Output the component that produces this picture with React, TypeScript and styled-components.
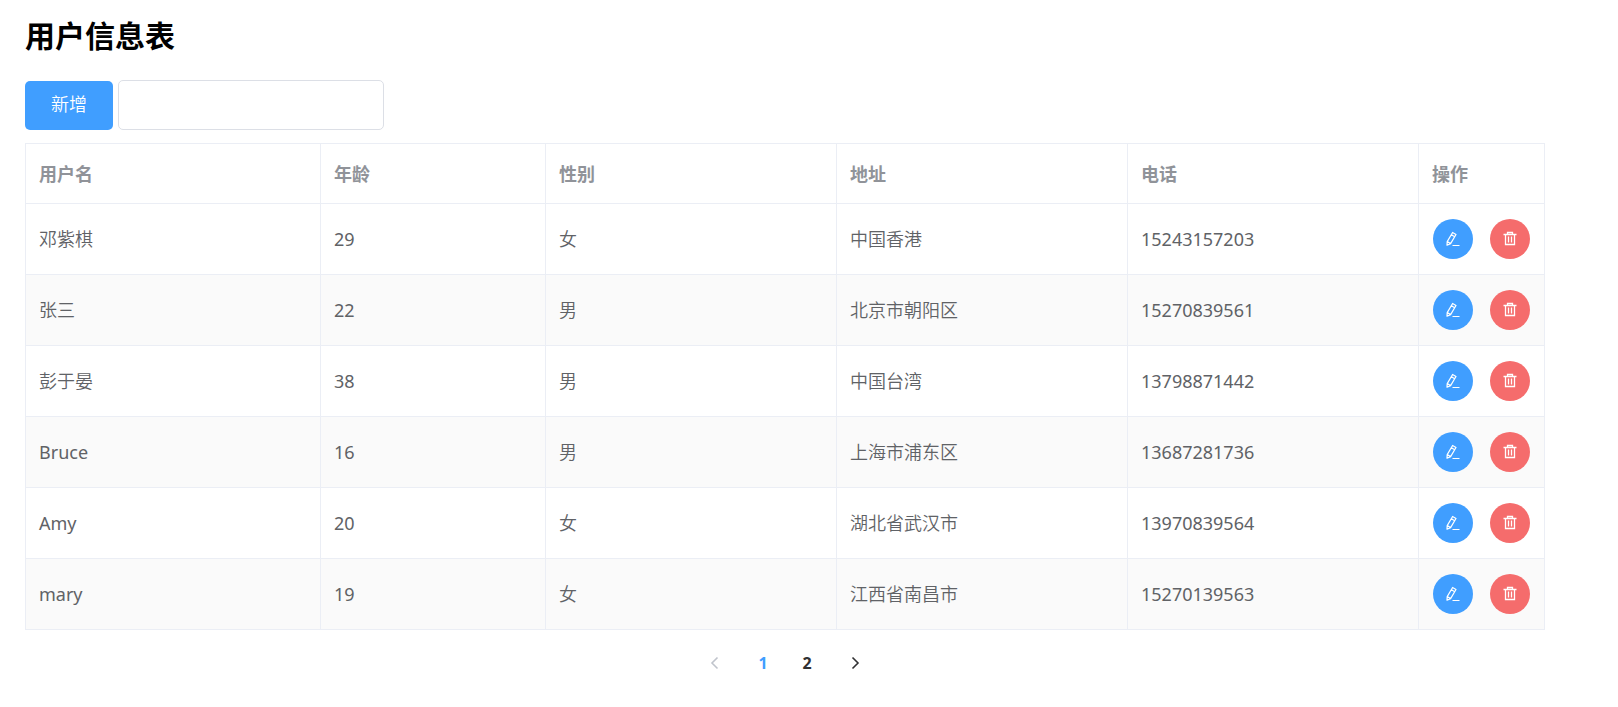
import React from "react";
import styled, { createGlobalStyle } from "styled-components";

const GlobalStyle = createGlobalStyle`
  * { box-sizing: border-box; }
  body {
    margin: 0;
    background: #fff;
    color: #606266;
    font-family: "Noto Sans", "Noto Sans CJK SC", sans-serif;
    font-size: 18px;
    line-height: 24px;
  }
  button, input { font: inherit; }
`;

const Page = styled.main`
  padding: 16px 73px 24px 25px;
`;

const Title = styled.h1`
  margin: 0 0 24px;
  color: #000;
  font-size: 30px;
  font-weight: 700;
  line-height: 40px;
`;

const Toolbar = styled.div`
  display: flex;
  align-items: flex-end;
  gap: 5px;
  margin-bottom: 13px;
`;

const AddButton = styled.button`
  width: 88px;
  height: 49px;
  padding: 0 0 3px;
  border: 0;
  border-radius: 5px;
  background: #409eff;
  color: #fff;
  font-weight: 350;
  cursor: pointer;
`;

const SearchInput = styled.input`
  width: 266px;
  height: 50px;
  padding: 0 18px;
  border: 1px solid #dcdfe6;
  border-radius: 5px;
  outline: none;
  color: #606266;
  &:focus { border-color: #409eff; }
`;

const Table = styled.table`
  width: 100%;
  table-layout: fixed;
  border-collapse: separate;
  border-spacing: 0;
  border: solid #ebeef5;
  border-width: 1px 0 0 1px;
`;

const Column = styled.col<{ $width?: number }>`
  width: ${({ $width }) => ($width ? `${$width}px` : "auto")};
`;

const HeadCell = styled.th`
  height: 60px;
  padding: 0 13px;
  border: solid #ebeef5;
  border-width: 0 1px 1px 0;
  color: #909399;
  font-weight: 700;
  text-align: left;
`;

const Row = styled.tr`
  &:nth-child(even) { background: #fafafa; }
`;

const Cell = styled.td<{ $latin?: boolean }>`
  height: 71px;
  padding: 0 13px;
  border: solid #ebeef5;
  border-width: 0 1px 1px 0;
  font-weight: ${({ $latin }) => ($latin ? 400 : 350)};
`;

const Actions = styled.div`
  display: flex;
  gap: 17px;
  padding-left: 1px;
`;

const RoundButton = styled.button<{ $tone: "primary" | "danger" }>`
  display: flex;
  flex: none;
  align-items: center;
  justify-content: center;
  width: 40px;
  height: 40px;
  padding: 0;
  border: 0;
  border-radius: 50%;
  background: ${({ $tone }) => ($tone === "primary" ? "#409eff" : "#f56c6c")};
  color: #fff;
  cursor: pointer;
`;

const Icon = styled.svg`
  display: block;
  width: 16px;
  height: 16px;
  fill: none;
  stroke: currentColor;
`;

const Pagination = styled.nav`
  display: flex;
  justify-content: center;
  margin-top: 15px;
`;

const Pages = styled.ul`
  display: flex;
  margin: 0 4px;
  padding: 0;
  list-style: none;
`;

const PageButton = styled.button<{ $active?: boolean }>`
  display: flex;
  align-items: center;
  justify-content: center;
  width: 44px;
  height: 36px;
  padding: 0;
  border: 0;
  background: none;
  color: ${({ $active }) => ($active ? "#409eff" : "#303133")};
  font-size: 16px;
  font-weight: 700;
  cursor: pointer;
  &:disabled { color: #c0c4cc; cursor: not-allowed; }
`;

const EditIcon = () => (
  <Icon viewBox="0 0 16 16" strokeWidth="1.2" strokeLinejoin="round" aria-hidden="true">
    <path d="M7.6 1.5 11 3.5 5.6 12.6 2 14.2 2.2 10.6zM6.4 3.7 9.7 5.7M2.2 10.6 5.6 12.6M7.5 14.5h7" />
  </Icon>
);

const DeleteIcon = () => (
  <Icon viewBox="0 0 16 16" strokeWidth="1.3" aria-hidden="true">
    <path d="M1.5 3.5h13M5.5 3.5v-2h5v2M3.5 3.5v10h9v-10M6.5 5.5v6M9.5 5.5v6" />
  </Icon>
);

const ChevronIcon = ({ d }: { d: string }) => (
  <Icon viewBox="0 0 16 16" strokeWidth="1.6" aria-hidden="true">
    <path d={d} />
  </Icon>
);

const headings = ["用户名", "年龄", "性别", "地址", "电话", "操作"];

const users = [
  { name: "邓紫棋", age: 29, gender: "女", address: "中国香港", phone: "15243157203" },
  { name: "张三", age: 22, gender: "男", address: "北京市朝阳区", phone: "15270839561" },
  { name: "彭于晏", age: 38, gender: "男", address: "中国台湾", phone: "13798871442" },
  { name: "Bruce", age: 16, gender: "男", address: "上海市浦东区", phone: "13687281736" },
  { name: "Amy", age: 20, gender: "女", address: "湖北省武汉市", phone: "13970839564" },
  { name: "mary", age: 19, gender: "女", address: "江西省南昌市", phone: "15270139563" },
];

const isLatin = (text: string) => /^[\w\s]+$/.test(text);

export default function App() {
  return (
    <Page lang="zh-CN">
      <GlobalStyle />
      <Title>用户信息表</Title>
      <Toolbar>
        <AddButton type="button">新增</AddButton>
        <SearchInput type="text" aria-label="搜索" />
      </Toolbar>
      <Table>
        <colgroup>
          <Column $width={295} />
          <Column $width={225} />
          <Column />
          <Column />
          <Column />
          <Column $width={126} />
        </colgroup>
        <thead>
          <tr>
            {headings.map((heading) => (
              <HeadCell key={heading} scope="col">{heading}</HeadCell>
            ))}
          </tr>
        </thead>
        <tbody>
          {users.map((user) => (
            <Row key={user.phone}>
              <Cell $latin={isLatin(user.name)}>{user.name}</Cell>
              <Cell $latin>{user.age}</Cell>
              <Cell>{user.gender}</Cell>
              <Cell>{user.address}</Cell>
              <Cell $latin>{user.phone}</Cell>
              <Cell>
                <Actions>
                  <RoundButton type="button" $tone="primary" aria-label="编辑"><EditIcon /></RoundButton>
                  <RoundButton type="button" $tone="danger" aria-label="删除"><DeleteIcon /></RoundButton>
                </Actions>
              </Cell>
            </Row>
          ))}
        </tbody>
      </Table>
      <Pagination aria-label="分页">
        <PageButton type="button" disabled aria-label="上一页"><ChevronIcon d="M10.5 2.5 5 8l5.5 5.5" /></PageButton>
        <Pages>
          <li><PageButton type="button" $active aria-current="page">1</PageButton></li>
          <li><PageButton type="button">2</PageButton></li>
        </Pages>
        <PageButton type="button" aria-label="下一页"><ChevronIcon d="M5.5 2.5 11 8l-5.5 5.5" /></PageButton>
      </Pagination>
    </Page>
  );
}
